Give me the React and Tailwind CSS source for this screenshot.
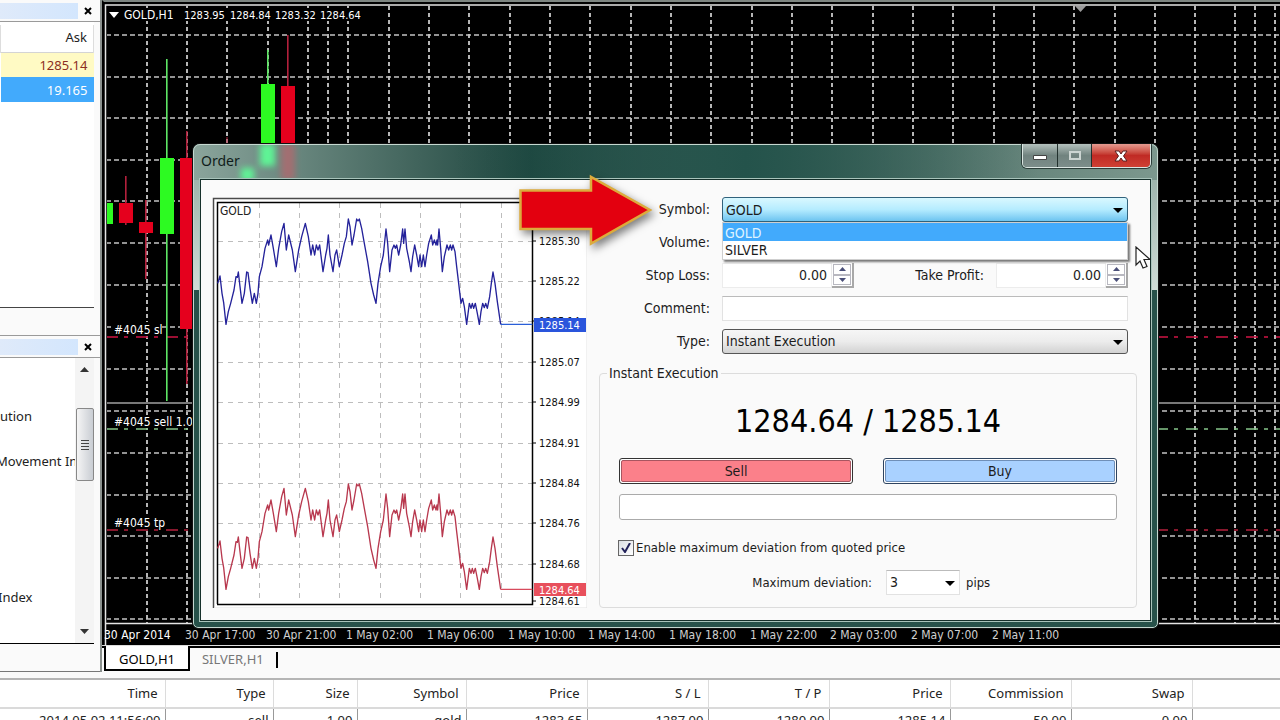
import React, { useState } from 'react';

const GRID_X = [147, 187, 227, 268, 308, 328, 348, 389, 429, 469, 510, 550, 590, 631, 671, 711, 752, 792, 832, 873, 913, 953, 994, 1034, 1074, 1115, 1155, 1195, 1235, 1255, 1275];
const GRID_Y = [35, 77, 118, 160, 201, 243, 285, 327, 369, 411, 453, 495, 536, 578, 619];

const CANDLES = [
  { x: 106, top: 203, bottom: 224, high: 173, low: 224, up: true },
  { x: 126, top: 203, bottom: 223, high: 176, low: 225 },
  { x: 146, top: 222, bottom: 233, high: 200, low: 279 },
  { x: 167, top: 158, bottom: 234, high: 59, low: 401, up: true },
  { x: 187, top: 158, bottom: 329, high: 131, low: 384 },
  { x: 268, top: 84, bottom: 170, high: 50, low: 170, up: true },
  { x: 288, top: 86, bottom: 178, high: 35, low: 178 },
];

const QUOTES = [[184, '1283.95'], [230, '1284.84'], [275, '1283.32'], [320, '1284.64']];

const TIMES = [
  [104, '30 Apr 2014'], [185, '30 Apr 17:00'], [266, '30 Apr 21:00'], [346, '1 May 02:00'],
  [427, '1 May 06:00'], [508, '1 May 10:00'], [588, '1 May 14:00'], [669, '1 May 18:00'],
  [750, '1 May 22:00'], [830, '2 May 03:00'], [911, '2 May 07:00'], [992, '2 May 11:00'],
];

// tick line, three units per pixel
const TICKS = '83,430 90,408 96,460 101,488 108,553 115,515 122,490 132,450 138,410 142,412 145,396 150,440 156,490 163,460 170,396 174,398 180,445 187,490 193,460 199,490 204,460 208,410 216,380 225,325 233,300 236,315 243,285 250,325 259,380 266,325 275,275 282,250 289,330 296,285 307,330 316,395 326,330 335,290 346,250 355,290 363,345 368,315 374,345 379,315 384,330 389,315 399,395 407,345 411,325 415,285 420,345 429,395 435,345 440,330 448,380 456,345 463,310 469,290 475,237 480,260 486,315 492,285 500,237 504,243 508,237 515,265 523,310 533,365 543,430 551,465 558,490 564,430 572,380 580,345 588,267 593,310 599,395 606,330 612,315 616,325 620,315 626,345 632,315 638,267 641,310 645,267 650,325 658,365 663,395 668,350 674,315 680,345 686,380 690,345 695,380 700,345 705,380 710,345 716,310 724,285 728,315 733,300 738,315 741,300 743,315 747,267 752,325 757,395 763,350 771,315 776,330 781,315 785,330 789,315 795,335 800,380 806,430 813,490 818,475 823,500 830,553 838,490 843,505 847,490 851,505 856,490 862,520 868,553 873,515 878,490 883,503 887,490 892,505 899,470 904,430 909,396 915,430 922,485 932,553';

const PRICES = [
  [43, '1285.30'], [83, '1285.22'], [123, '1285.14'], [164, '1285.07'], [204, '1284.99'],
  [245, '1284.91'], [285, '1284.84'], [325, '1284.76'], [366, '1284.68'], [403, '1284.61'],
];

const COLUMNS = [
  ['Time', '2014.05.02 11:56:00', 'w-[165px]'],
  ['Type', 'sell', 'w-[108px]'],
  ['Size', '1.00', 'w-[84px]'],
  ['Symbol', 'gold', 'w-[109px]'],
  ['Price', '1283.65', 'w-[121px]'],
  ['S / L', '1287.00', 'w-[121px]'],
  ['T / P', '1280.00', 'w-[121px]'],
  ['Price', '1285.14', 'w-[121px]'],
  ['Commission', '50.00', 'w-[121px]'],
  ['Swap', '0.00', 'w-[121px]'],
];

function PanelHeader() {
  return (
    <div className="flex h-[22px] items-center border-b border-[#9a9a9a] bg-[#fafafa]">
      <div className="h-4 flex-1 bg-linear-to-r from-[#dfeafa] to-[#d3e6fd]" />
      <button aria-label="Close panel" className="flex w-[22px] justify-center pr-0.5">
        <svg width="8" height="8" viewBox="0 0 8 8" stroke="#000" strokeWidth="2"><path d="M1 1l6 6M7 1L1 7" /></svg>
      </button>
    </div>
  );
}

function Sidebar() {
  return (
    <aside className="flex w-[100px] shrink-0 flex-col bg-[#fafafa] font-['Noto_Sans',sans-serif] text-[13px] leading-5 text-[#222]">
      <PanelHeader />
      <div className="mr-1.5 h-[286px] border-b border-[#444] bg-white pt-[3px]">
        <table className="w-full text-right">
          <thead>
            <tr className="h-[27px] border-b border-[#d4d4d4]"><th className="border-x border-[#ddd] pb-0.5 pr-1.5 font-normal">Ask</th></tr>
          </thead>
          <tbody>
            <tr className="h-[25px] bg-[#fffac4] text-[#8c2f22]"><td className="pr-1.5">1285.14</td></tr>
            <tr className="h-[25px] border-l border-white bg-[#42aafc] text-white"><td className="pr-1.5">19.165</td></tr>
          </tbody>
        </table>
      </div>
      <div className="h-7 border-b border-[#9a9a9a]" />
      <PanelHeader />
      <div className="mr-1.5 flex h-[286px] border-b border-black bg-white">
        <ul className="flex-1 overflow-hidden whitespace-nowrap">
          <li className="mt-12">ution</li>
          <li className="-ml-1 mt-[25px]">Movement In</li>
          <li className="-ml-0.5 mt-[116px]">Index</li>
        </ul>
        <div className="flex w-[19px] flex-col items-center bg-[#f4f4f4] py-2">
          <svg width="9" height="6" viewBox="0 0 9 6"><path d="M0 6l4.500-5L9 6z" fill="#333" /></svg>
          <div className="mt-9 flex h-[73px] w-[18px] items-center justify-center rounded-xs border border-[#888] bg-linear-to-r from-[#f5f5f5] to-[#c9cdd3]">
            <svg width="8" height="11" viewBox="0 0 8 11" stroke="#444" strokeWidth="1"><path d="M0 1.500h8M0 4.500h8M0 7.500h8M0 10.500h8" /></svg>
          </div>
          <svg className="mt-auto" width="9" height="6" viewBox="0 0 9 6"><path d="M0 0l4.500 5L9 0z" fill="#333" /></svg>
        </div>
      </div>
      <div className="flex-1 border-b border-[#777]" />
    </aside>
  );
}

function PriceChart() {
  return (
    <svg className="min-h-0 w-full flex-1 bg-black font-['DejaVu_Sans_Condensed','Noto_Sans',sans-serif] text-[12px]" viewBox="104 4 1176 641" preserveAspectRatio="xMinYMin slice">
      <g stroke="#c4c4c4" strokeDasharray="4 3" strokeWidth="1.500">
        {GRID_X.map((x) => <line key={x} x1={x} x2={x} y1="6" y2="623" stroke="#f2f2f2" />)}
        {GRID_Y.map((y) => <line key={y} x1="106" x2="1280" y1={y} y2={y} strokeDasharray="5 3" />)}
      </g>
      <path d="M106 403H1280" stroke="#a0a0a0" strokeWidth="1.500" />
      <g strokeDasharray="12 6 4 8" strokeWidth="1.600">
        <line x1="106" x2="1280" y1="337" y2="337" stroke="#d01444" />
        <line x1="106" x2="1280" y1="429" y2="429" stroke="#86c68a" />
        <line x1="106" x2="1280" y1="530" y2="530" stroke="#b4203c" />
      </g>
      {CANDLES.map((c) => (
        <g key={c.x} fill={c.up ? '#2dfa22' : '#e5001d'}>
          <rect x={c.x - 1} y={c.high} width="1.600" height={c.low - c.high} fill={c.up ? '#5ee665' : '#b3203c'} />
          <rect x={c.x - 7} y={c.top} width="14" height={c.bottom - c.top} />
        </g>
      ))}
      <path d="M227 137v8" stroke="#b3203c" />
      <path d="M104 4h3v620h-3z" fill="#000" />
      <path d="M105.500 645V5H1280M106 623.500H1280" fill="none" stroke="#e4e4e4" strokeWidth="1.500" />
      <path d="M1075 6h11l-5.500 6z" fill="#9b9b9b" />
      <path d="M109 12h10l-5 6z" fill="#fff" />
      <g fill="#000">
        <rect x="124" y="8" width="240" height="13" />
        <rect x="113" y="322" width="46" height="14" />
        <rect x="113" y="415" width="78" height="13" />
        <rect x="113" y="516" width="50" height="13" />
      </g>
      <g fill="#fff">
        <text x="124" y="19">GOLD,H1</text>
        {QUOTES.map(([x, label]) => <text key={x} x={x} y="19" fontSize="11">{label}</text>)}
        <text x="114" y="334">#4045 sl</text>
        <text x="114" y="426">#4045 sell 1.00</text>
        <text x="114" y="527">#4045 tp</text>
      </g>
      <g fill="#d0d0d0">
        {TIMES.map(([x, label]) => <text key={x} x={x} y="639" fill={x < 110 ? '#fff' : undefined}>{label}</text>)}
      </g>
    </svg>
  );
}

function TickChart() {
  return (
    <svg width="375" height="411" viewBox="0 -1 375 411" className="shrink-0 font-['DejaVu_Sans_Condensed','Noto_Sans',sans-serif] text-[11px]">
      <path d="M0 0h375v410H0z" fill="#fff" />
      <path d="M1.500 410V.500H322" fill="none" stroke="#4a4a4a" strokeWidth="1.500" />
      <path d="M375 0v410H2" fill="none" stroke="#e2e2e2" />
      <g stroke="#bdbdbd" strokeDasharray="5 5" shapeRendering="crispEdges">
        {[47, 87, 127, 168, 208, 248, 289].map((x) => <line key={x} x1={x} x2={x} y1="5" y2="405" />)}
        {PRICES.slice(0, 9).map(([y]) => <line key={y} x1="6" x2="320" y1={y} y2={y} />)}
      </g>
      <path d="M5.500 406V4.500H320.500V406.500H5" fill="none" stroke="#000" strokeWidth="1.500" />
      <text x="8" y="17" fill="#222" fontSize="12">GOLD</text>
      {PRICES.map(([y, label]) => (
        <g key={label}>
          <path d={`M320 ${y}h4`} stroke="#000" />
          <text x="327" y={y + 4} fill="#111">{label}</text>
        </g>
      ))}
      <g fill="none" strokeWidth="4" strokeLinejoin="round" transform="translate(-22 -58) scale(.33333)">
        <polyline points={TICKS} stroke="#24229a" />
        <path d="M932 553h95" stroke="#2a5fd8" />
        <g transform="translate(0 795)">
          <polyline points={TICKS} stroke="#b8384e" />
          <path d="M932 553h95" stroke="#d84a5c" />
        </g>
      </g>
      <rect x="322" y="120" width="52" height="14" fill="#2a55dc" />
      <text x="327" y="131" fill="#fff">1285.14</text>
      <rect x="322" y="385" width="52" height="13" fill="#e8505c" />
      <text x="327" y="396" fill="#fff">1284.64</text>
    </svg>
  );
}

function DownArrow() {
  return (
    <svg className="pointer-events-none absolute right-[5px] top-1/2 -mt-0.5" width="10" height="5" viewBox="0 0 10 5"><path d="M0 0h10L5 5z" fill="#000" /></svg>
  );
}

function Spinner({ id, value, onChange }) {
  const step = (d) => onChange((Number(value) + d).toFixed(2));
  return (
    <div className="flex h-[25px] w-[132px]">
      <input id={id} value={value} onChange={(e) => onChange(e.target.value)} className="min-w-0 flex-1 border border-[#ececec] bg-white pr-1 text-right" />
      <div className="flex w-[22px] flex-col border-b-2 border-r-2 border-[#a8a8a8] bg-white p-px">
        <button aria-label="Increase" onClick={() => step(0.01)} className="flex flex-1 items-center justify-center border border-[#b8b8c0]">
          <svg width="7" height="4" viewBox="0 0 7 4"><path d="M0 4l3.500-4L7 4z" fill="#4a4f78" /></svg>
        </button>
        <button aria-label="Decrease" onClick={() => step(-0.01)} className="flex flex-1 items-center justify-center border border-[#b8b8c0]">
          <svg width="7" height="4" viewBox="0 0 7 4"><path d="M0 0l3.500 4L7 0z" fill="#4a4f78" /></svg>
        </button>
      </div>
    </div>
  );
}

function OrderForm() {
  const [symbol, setSymbol] = useState('GOLD');
  const [volume, setVolume] = useState('');
  const [stopLoss, setStopLoss] = useState('0.00');
  const [takeProfit, setTakeProfit] = useState('0.00');
  const [comment, setComment] = useState('');
  const [limit, setLimit] = useState(true);

  return (
    <div className="min-w-0 flex-1">
      <div className="flex flex-col gap-2 pr-[9px]">
        <div className="flex h-[25px] items-center gap-3">
          <label htmlFor="symbol" className="w-[111px] text-right">Symbol:</label>
          <div className="relative flex-1">
            <select id="symbol" value={symbol} onChange={(e) => setSymbol(e.target.value)} className="block h-[25px] w-full appearance-none rounded-[3px] border border-[#31627c] bg-linear-to-b from-[#d9f8ff] via-[#b5ecff] to-[#6cc4f0] pl-[3px] pt-0.5">
              <option>GOLD</option>
              <option>SILVER</option>
            </select>
            <DownArrow />
            <ul className="absolute inset-x-0 top-[25px] z-10 border border-[#cfcfcf] bg-white leading-[17px] shadow-[2px_2px_2px_#777]">
              <li className="h-[18px] bg-[#42aafc] pl-0.5 pt-0.5 leading-4 text-[#dff3ff]"><button onClick={() => setSymbol('GOLD')}>GOLD</button></li>
              <li className="h-[18px] pl-0.5 pt-px"><button onClick={() => setSymbol('SILVER')}>SILVER</button></li>
            </ul>
          </div>
        </div>
        <div className="flex h-[25px] items-center gap-3">
          <label htmlFor="volume" className="w-[111px] text-right">Volume:</label>
          <input id="volume" value={volume} onChange={(e) => setVolume(e.target.value)} className="h-[25px] w-[132px] border border-[#ececec] bg-white" />
        </div>
        <div className="flex h-[25px] items-center gap-3">
          <label htmlFor="sl" className="w-[111px] text-right">Stop Loss:</label>
          <Spinner id="sl" value={stopLoss} onChange={setStopLoss} />
          <label htmlFor="tp" className="flex-1 text-right">Take Profit:</label>
          <Spinner id="tp" value={takeProfit} onChange={setTakeProfit} />
        </div>
        <div className="flex h-[25px] items-center gap-3">
          <label htmlFor="comment" className="w-[111px] text-right">Comment:</label>
          <input id="comment" value={comment} onChange={(e) => setComment(e.target.value)} className="h-[25px] flex-1 border border-[#e2e2e2] border-t-[#bbb] bg-white px-1" />
        </div>
        <div className="flex h-[25px] items-center gap-3">
          <label htmlFor="type" className="w-[111px] text-right">Type:</label>
          <div className="relative flex-1">
            <select id="type" className="block h-[25px] w-full appearance-none rounded-[3px] border border-[#555] bg-linear-to-b from-[#f6f6f6] via-[#ececec] to-[#d2d2d2] pl-[3px]">
              <option>Instant Execution</option>
            </select>
            <DownArrow />
          </div>
        </div>
      </div>

      <fieldset className="mt-[9px] rounded-[4px] border border-[#dcdcdc] px-[19px] pb-3">
        <legend className="-ml-3 px-0.5 leading-5">Instant Execution</legend>
        <p className="mt-[18px] text-center text-[32px] leading-10 text-black">1284.64 / 1285.14</p>
        <div className="mt-[17px] flex gap-[30px]">
          <button className="h-[26px] flex-1 rounded-[3px] border border-[#333] bg-white p-px">
            <span className="flex h-full items-center justify-center rounded-xs border border-[#a85560] bg-[#fb808a]">Sell</span>
          </button>
          <button className="h-[26px] flex-1 rounded-[3px] border border-[#2f4460] bg-white p-px">
            <span className="flex h-full items-center justify-center rounded-xs border border-[#6f8fb8] bg-[#a9d1ff]">Buy</span>
          </button>
        </div>
        <div className="mt-[10px] h-[26px] rounded-[3px] border border-[#aaa] bg-white" />
        <label className="mt-[18px] flex h-5 items-center gap-0.5 text-[13px]">
          <span className="relative -ml-px size-4">
            <input type="checkbox" checked={limit} onChange={(e) => setLimit(e.target.checked)} className="block size-4 appearance-none border border-[#666] bg-linear-to-br from-[#dcdfe4] to-white" />
            {limit && <svg className="pointer-events-none absolute left-[3px] top-[3px]" width="10" height="10" viewBox="0 0 10 10" fill="none" stroke="#22225a" strokeWidth="2"><path d="M1 5l3 4L9 0" /></svg>}
          </span>
          Enable maximum deviation from quoted price
        </label>
        <div className="mt-3 flex h-[25px] items-center text-[13px]">
          <label htmlFor="deviation" className="w-[253px] text-right">Maximum deviation:</label>
          <div className="relative ml-3.5 mr-1.5 w-[74px] text-[14px]">
            <select id="deviation" className="block h-[25px] w-full appearance-none border border-[#e2e2e2] border-t-[#bbb] bg-white pl-[3px]">
              <option>3</option>
            </select>
            <DownArrow />
          </div>
          pips
        </div>
      </fieldset>
    </div>
  );
}

function OrderWindow() {
  return (
    <section className="absolute left-[193px] top-[144px] w-[965px] overflow-hidden rounded-t-[7px] rounded-b-[5px] bg-[#27524a] px-2 pb-2 font-['DejaVu_Sans_Condensed','Noto_Sans',sans-serif] text-[14px] text-[#1c1c1c] shadow-[0_0_0_1px_#111]">
      {/* glass frame: title bar and lit side edges */}
      <div className="absolute inset-x-0 top-0 h-[146px] bg-linear-to-b from-[#8fa8a0] to-[#cfdcd6]" />
      <div className="absolute inset-x-0 top-0 h-9 bg-linear-to-r from-[#8ba59c] via-[#1c453e] via-35% to-[#7c988e]" />
      <div className="absolute left-[260px] right-[120px] top-0 h-9 bg-linear-to-r from-transparent via-[#24534b] to-transparent" />
      <div className="absolute left-[67px] top-0 h-[22px] w-[15px] bg-[#5dff97] opacity-90 blur-[3px]" />
      <div className="absolute left-[48px] top-[24px] size-[13px] bg-[#5dff97] opacity-90 blur-[3px]" />
      <div className="absolute left-[88px] top-0 h-9 w-[14px] bg-[#b0686e] opacity-80 blur-[3px]" />
      <div className="pointer-events-none absolute inset-0 rounded-t-[7px] rounded-b-[5px] border border-[#c5d8d0]" />

      <header className="relative flex h-9 items-start justify-between">
        <h1 className="pt-[7px] font-['Noto_Sans',sans-serif] leading-5 text-[#101c1a]">Order</h1>
        <div className="-mr-px flex h-6 overflow-hidden rounded-b-[5px] border border-t-0 border-[#dbe6e2] text-white shadow-[0_0_0_1px_#2b3d39]">
          <button aria-label="Minimize" className="flex w-[35px] items-center justify-center border-r border-[#22302d] bg-linear-to-b from-[#b4c1bd] via-[#71837f] via-50% to-[#7c8d8a] pt-1">
            <svg width="14" height="6" viewBox="0 0 14 6"><path d="M.500.500h13v4H.500z" fill="#fff" stroke="#444" /></svg>
          </button>
          <button aria-label="Maximize" className="flex w-[34px] items-center justify-center border-r border-[#22302d] bg-linear-to-b from-[#b4c1bd] via-[#71837f] via-50% to-[#7c8d8a]">
            <svg width="14" height="11" viewBox="0 0 14 11" fill="none" stroke="#ccd5d2" strokeWidth="2"><path d="M2 2h10v7H2z" /></svg>
          </button>
          <button aria-label="Close" className="flex w-[58px] items-center justify-center bg-linear-to-b from-[#e59a90] via-[#c02a24] via-50% to-[#cf4034]">
            <svg width="14" height="12" viewBox="0 0 14 12"><path d="M1 1h4l2 3 2-3h4L9.500 6l3.500 5H9L7 8l-2 3H1l3.500-5z" fill="#fff" stroke="#5a2020" /></svg>
          </button>
        </div>
      </header>
      <div className="relative flex gap-3 bg-[#fafafa] pb-3 pl-[11px] pr-[13px] pt-[17px] shadow-[0_0_0_1px_#16302b,0_0_0_2px_#a9c4bb]">
        <TickChart />
        <OrderForm />
      </div>
    </section>
  );
}

function Terminal() {
  return (
    <div className="h-12 shrink-0 overflow-hidden bg-[#fafafa] pt-1.5 font-['Noto_Sans',sans-serif] text-[13px] text-[#222]">
      <table className="w-full table-fixed border-t-2 border-[#b5b5b5] bg-white text-right">
        <thead>
          <tr className="h-[29px] border-b-2 border-[#dadada]">
            {COLUMNS.map(([name, , width], i) => (
              <th key={i} className={`${width} border-r border-[#dcdcdc] pr-[7px] font-normal`}>{name}</th>
            ))}
            <th />
          </tr>
        </thead>
        <tbody>
          <tr className="h-6">
            {COLUMNS.map(([, value], i) => <td key={i} className="border-r border-[#999] pr-1">{value}</td>)}
            <td />
          </tr>
        </tbody>
      </table>
    </div>
  );
}

export default function App() {
  return (
    <div className="relative flex h-screen flex-col overflow-hidden bg-[#fafafa]">
      <div className="flex min-h-0 flex-1">
        <Sidebar />
        <main className="flex min-w-0 flex-1 flex-col border-l-2 border-[#8b918e]">
          <div className="flex min-h-0 flex-1 flex-col border-l-2 border-t-2 border-black border-t-[#7d8581] bg-black pt-0.5">
            <PriceChart />
          </div>
          <nav className="flex h-[27px] items-start border-t border-[#ddd] bg-[#fafafa] font-['Noto_Sans',sans-serif] text-[13px] leading-5">
            <div className="flex w-full border-t-2 border-black pl-0.5">
              <a href="#gold" className="-mt-0.5 h-[25px] border-2 border-t-0 border-black bg-white px-[13px] pt-[3px] text-black">GOLD,H1</a>
              <a href="#silver" className="px-3 pt-px text-[#777]">SILVER,H1</a>
              <span className="mt-1 h-4 w-0.5 bg-black" />
            </div>
          </nav>
        </main>
      </div>
      <Terminal />

      <OrderWindow />

      <svg className="pointer-events-none absolute left-[512px] top-[168px] drop-shadow-[3px_4px_4px_rgba(0,0,0,0.5)]" width="146" height="86" viewBox="512 168 146 86">
        <path d="M520.500 190.500H591V177L650 210L591 243.500V229H520.500z" fill="#e3000f" stroke="#dcab3c" strokeWidth="2.500" />
      </svg>
      <svg className="pointer-events-none absolute left-[1135px] top-[246px]" width="16" height="24" viewBox="0 0 16 24">
        <path d="M1 1v18l4-4 3 7 4-1.500-3-7h6z" fill="#fff" stroke="#222" strokeWidth="1.200" />
      </svg>
    </div>
  );
}
